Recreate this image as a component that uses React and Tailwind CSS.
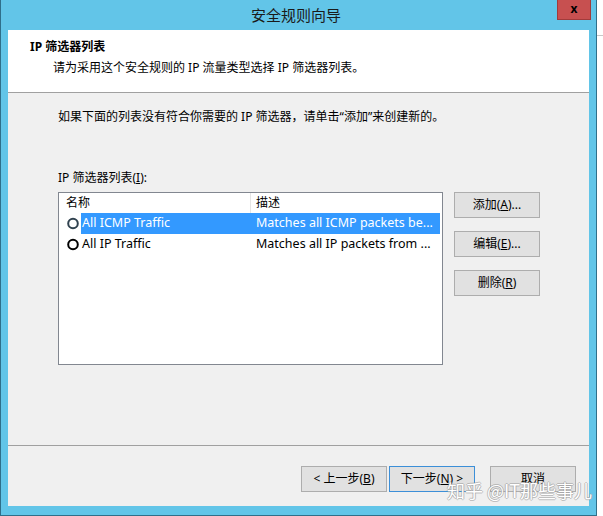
import React from "react";

const F = { fontFamily: '"Segoe UI", "Noto Sans", "Noto Sans CJK SC", sans-serif' };

function Btn({ children, def = false, className = "" }) {
  return (
    <div
      className={`h-[26px] w-[86px] flex items-center justify-center text-[12px] text-black bg-[#e1e1e1] border ${
        def ? "border-[#3c8fd8]" : "border-[#adadad]"
      } ${className}`}
    >
      {children}
    </div>
  );
}

function Radio({ dark }) {
  return (
    <svg width="13" height="13" viewBox="0 0 13 13" className="shrink-0">
      <circle cx="6" cy="6.5" r="4.8" fill="none" stroke={dark ? "#000" : "#30424f"} strokeWidth="2" />
    </svg>
  );
}

export default function App() {
  return (
    <div className="w-[603px] h-[516px] flex bg-white overflow-hidden relative" style={F}>
      <div className="w-[597px] h-full bg-[#62c5e8] border-l border-r border-[#2f6f8a] flex flex-col">
        {/* title bar */}
        <div className="h-[30px] flex items-start shrink-0">
          <div className="flex-1" />
          <div className="pt-[5px] text-[15px] leading-[20px] text-[#1a1a1a]" style={{ fontFamily: '"Noto Sans CJK SC", sans-serif' }}>
            安全规则向导
          </div>
          <div className="flex-1 flex justify-end pr-[5px]">
            <div className="w-[34px] h-[20px] bg-[#c75050] border border-[#a13b3b] border-t-0 flex items-center justify-center text-[12px] font-bold text-black leading-none pb-[2px]">
              x
            </div>
          </div>
        </div>

        {/* content */}
        <div className="mx-[7px] flex-1 flex flex-col bg-[#f0f0f0]" style={{ fontFamily: '"Noto Sans", "Noto Sans CJK SC", sans-serif' }}>
          {/* header */}
          <div className="h-[63px] bg-white border-b border-[#a0a0a0] shrink-0 pt-[9px]">
            <div className="pl-[22px] text-[12px] leading-[16px] font-bold text-black">IP 筛选器列表</div>
            <div className="pl-[45px] mt-[5px] text-[12px] leading-[16px] text-black">
              请为采用这个安全规则的 IP 流量类型选择 IP 筛选器列表。
            </div>
          </div>

          {/* body */}
          <div className="h-[353px] shrink-0 border-b border-[#a0a0a0] pl-[50px] pt-[16px]">
            <div className="text-[12px] leading-[16px] text-black">
              如果下面的列表没有符合你需要的 IP 筛选器，请单击“添加”来创建新的。
            </div>
            <div className="mt-[45px] text-[12px] leading-[16px] text-black">
              IP 筛选器列表(<span className="underline">I</span>):
            </div>
            <div className="mt-[6px] flex gap-[11px]">
              <div className="w-[385px] h-[173px] bg-white border border-[#828790] flex flex-col">
                <div className="h-[20px] flex text-[12px] leading-[20px] text-black">
                  <div className="w-[192px] pl-[7px] border-r border-[#e5e5e5]">名称</div>
                  <div className="pl-[5px]">描述</div>
                </div>
                <div className="h-[21px] flex items-center pl-[8px] pr-[2px] text-[12.5px]">
                  <Radio />
                  <div className="flex-1 h-full flex items-center bg-[#3399ff] text-white ml-[1px]">
                    <div className="w-[174px] pl-[1px]">All ICMP Traffic</div>
                    <div className="pl-[1px] whitespace-nowrap overflow-hidden">Matches all ICMP packets be...</div>
                  </div>
                </div>
                <div className="h-[21px] flex items-center pl-[8px] pr-[2px] text-[12.5px] text-black">
                  <Radio dark />
                  <div className="flex-1 h-full flex items-center ml-[1px]">
                    <div className="w-[174px] pl-[1px]">All IP Traffic</div>
                    <div className="pl-[1px] whitespace-nowrap overflow-hidden">Matches all IP packets from ...</div>
                  </div>
                </div>
              </div>
              <div className="flex flex-col gap-[13px]">
                <Btn>
                  添加(<span className="underline">A</span>)...
                </Btn>
                <Btn>
                  编辑(<span className="underline">E</span>)...
                </Btn>
                <Btn>
                  删除(<span className="underline">R</span>)
                </Btn>
              </div>
            </div>
          </div>

          {/* footer */}
          <div className="flex-1 flex justify-end items-start pt-[20px] pr-[13px]">
            <Btn>
              &lt; 上一步(<span className="underline">B</span>)
            </Btn>
            <Btn def className="ml-[2px]">
              下一步(<span className="underline">N</span>) &gt;
            </Btn>
            <Btn className="ml-[15px]">取消</Btn>
          </div>
        </div>
        <div className="h-[9px] shrink-0" />
        <div className="h-px bg-[#2f6f8a] shrink-0" />
      </div>
      <div className="flex-1">
        <div className="mt-[35px] border-t border-[#c8c8c8]" />
      </div>

      {/* watermark */}
      <div
        className="absolute left-[447px] top-[478px] text-[18px] leading-[24px] text-white whitespace-nowrap"
        style={{
          fontFamily: '"Noto Sans CJK SC", sans-serif',
          textShadow:
            "1px 0 0 rgba(150,150,150,0.55), -1px 0 0 rgba(150,150,150,0.55), 0 1px 0 rgba(150,150,150,0.55), 0 -1px 0 rgba(150,150,150,0.55)",
        }}
      >
        知乎 @IT那些事儿
      </div>
    </div>
  );
}
